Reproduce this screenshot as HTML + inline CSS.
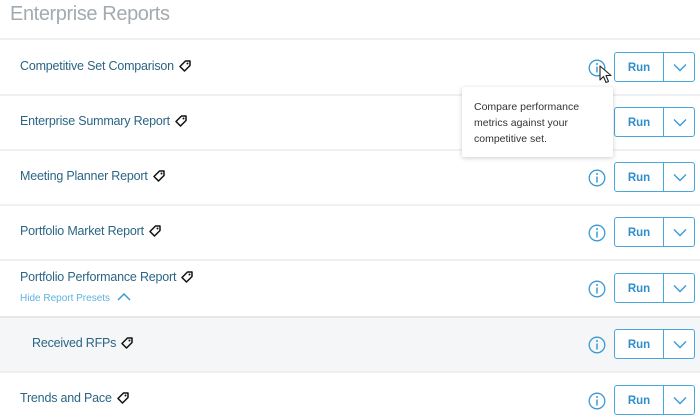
<!DOCTYPE html>
<html><head><style>
*{margin:0;padding:0;box-sizing:border-box}
body{width:700px;height:419px;background:#fff;font-family:"Liberation Sans",sans-serif;position:relative;overflow:hidden}
.title{position:absolute;left:10px;top:3px;font-size:20px;color:#a3abb0;font-weight:300;letter-spacing:-0.4px}
.line{position:absolute;left:0;width:700px;height:2px;background:#eef0f1}
.name{position:absolute;left:20px;font-size:12.5px;color:#2b6585;letter-spacing:-0.2px}
.tag{display:inline-block;vertical-align:-2px;margin-left:5px}
.info{position:absolute;left:588px;width:18px;height:18px}
.btn{position:absolute;left:614px;width:81px;height:30px;border:1px solid #48a8dc;border-radius:3px;background:#fff}
.btn .r{position:absolute;left:0;top:0;width:49px;height:28px;border-right:1px solid #48a8dc;color:#2f8fc8;font-weight:bold;font-size:11.5px;text-align:center;line-height:30px}
.btn svg{position:absolute;left:58px;top:10px}
.tip{position:absolute;left:462px;top:87px;width:151px;height:70px;background:#fff;box-shadow:0 1px 5px rgba(0,0,0,.2);border-radius:2px;font-size:10.5px;line-height:16px;color:#333;padding:12px 12px}
</style></head><body>
<div class="title">Enterprise Reports</div>
<div style="position:absolute;left:0;top:317px;width:700px;height:55px;background:#f4f6f7"></div>
<div class="line" style="top:38px"></div>
<div class="line" style="top:94px"></div>
<div class="line" style="top:149px"></div>
<div class="line" style="top:204px"></div>
<div class="line" style="top:259px"></div>
<div class="line" style="top:316px;background:#e4e8ea"></div>
<div class="line" style="top:371px"></div>

<div class="name" style="top:59px">Competitive Set Comparison<svg class="tag" width="12" height="12" viewBox="0 0 12 12"><path d="M1 6.5L6.5 1H11V5.5L5.5 11Z" fill="none" stroke="#111" stroke-width="1.5" stroke-linejoin="round"/><circle cx="8.5" cy="3.5" r="1" fill="#111"/></svg></div>
<div class="name" style="top:114px">Enterprise Summary Report<svg class="tag" width="12" height="12" viewBox="0 0 12 12"><path d="M1 6.5L6.5 1H11V5.5L5.5 11Z" fill="none" stroke="#111" stroke-width="1.5" stroke-linejoin="round"/><circle cx="8.5" cy="3.5" r="1" fill="#111"/></svg></div>
<div class="name" style="top:169px">Meeting Planner Report<svg class="tag" width="12" height="12" viewBox="0 0 12 12"><path d="M1 6.5L6.5 1H11V5.5L5.5 11Z" fill="none" stroke="#111" stroke-width="1.5" stroke-linejoin="round"/><circle cx="8.5" cy="3.5" r="1" fill="#111"/></svg></div>
<div class="name" style="top:224px">Portfolio Market Report<svg class="tag" width="12" height="12" viewBox="0 0 12 12"><path d="M1 6.5L6.5 1H11V5.5L5.5 11Z" fill="none" stroke="#111" stroke-width="1.5" stroke-linejoin="round"/><circle cx="8.5" cy="3.5" r="1" fill="#111"/></svg></div>
<div class="name" style="top:270px">Portfolio Performance Report<svg class="tag" width="12" height="12" viewBox="0 0 12 12"><path d="M1 6.5L6.5 1H11V5.5L5.5 11Z" fill="none" stroke="#111" stroke-width="1.5" stroke-linejoin="round"/><circle cx="8.5" cy="3.5" r="1" fill="#111"/></svg></div>
<div class="name" style="top:293px;font-size:10px;color:#5bb3e0;letter-spacing:0">Hide Report Presets <svg width="14" height="8" viewBox="0 0 14 8" style="margin-left:4px"><path d="M1 7L7 1L13 7" fill="none" stroke="#3a9ad6" stroke-width="1.5"/></svg></div>
<div class="name" style="top:336px;left:32px">Received RFPs<svg class="tag" width="12" height="12" viewBox="0 0 12 12"><path d="M1 6.5L6.5 1H11V5.5L5.5 11Z" fill="none" stroke="#111" stroke-width="1.5" stroke-linejoin="round"/><circle cx="8.5" cy="3.5" r="1" fill="#111"/></svg></div>
<div class="name" style="top:391px">Trends and Pace<svg class="tag" width="12" height="12" viewBox="0 0 12 12"><path d="M1 6.5L6.5 1H11V5.5L5.5 11Z" fill="none" stroke="#111" stroke-width="1.5" stroke-linejoin="round"/><circle cx="8.5" cy="3.5" r="1" fill="#111"/></svg></div>

<svg class="info" style="top:59px" viewBox="0 0 18 18"><circle cx="9" cy="9" r="7.8" fill="none" stroke="#3a9ad6" stroke-width="1.3"/><circle cx="9" cy="5" r="1" fill="#3a9ad6"/><path d="M9 7.5V13.5" stroke="#3a9ad6" stroke-width="1.5"/></svg>
<svg class="info" style="top:169px" viewBox="0 0 18 18"><circle cx="9" cy="9" r="7.8" fill="none" stroke="#3a9ad6" stroke-width="1.3"/><circle cx="9" cy="5" r="1" fill="#3a9ad6"/><path d="M9 7.5V13.5" stroke="#3a9ad6" stroke-width="1.5"/></svg>
<svg class="info" style="top:224px" viewBox="0 0 18 18"><circle cx="9" cy="9" r="7.8" fill="none" stroke="#3a9ad6" stroke-width="1.3"/><circle cx="9" cy="5" r="1" fill="#3a9ad6"/><path d="M9 7.5V13.5" stroke="#3a9ad6" stroke-width="1.5"/></svg>
<svg class="info" style="top:280px" viewBox="0 0 18 18"><circle cx="9" cy="9" r="7.8" fill="none" stroke="#3a9ad6" stroke-width="1.3"/><circle cx="9" cy="5" r="1" fill="#3a9ad6"/><path d="M9 7.5V13.5" stroke="#3a9ad6" stroke-width="1.5"/></svg>
<svg class="info" style="top:336px" viewBox="0 0 18 18"><circle cx="9" cy="9" r="7.8" fill="none" stroke="#3a9ad6" stroke-width="1.3"/><circle cx="9" cy="5" r="1" fill="#3a9ad6"/><path d="M9 7.5V13.5" stroke="#3a9ad6" stroke-width="1.5"/></svg>
<svg class="info" style="top:392px" viewBox="0 0 18 18"><circle cx="9" cy="9" r="7.8" fill="none" stroke="#3a9ad6" stroke-width="1.3"/><circle cx="9" cy="5" r="1" fill="#3a9ad6"/><path d="M9 7.5V13.5" stroke="#3a9ad6" stroke-width="1.5"/></svg>

<svg style="position:absolute;left:599px;top:65px" width="14" height="20" viewBox="0 0 14 20"><path d="M1 1V15L4.5 11.5L7 17.5L9.5 16.5L7 10.5H12Z" fill="#fff" stroke="#222" stroke-width="1.1" stroke-linejoin="round"/></svg>

<div class="btn" style="top:52px"><div class="r">Run</div><svg width="14" height="9" viewBox="0 0 14 9"><path d="M1 1.5L7 7.5L13 1.5" fill="none" stroke="#3a9ad6" stroke-width="1.4"/></svg></div>
<div class="btn" style="top:107px"><div class="r">Run</div><svg width="14" height="9" viewBox="0 0 14 9"><path d="M1 1.5L7 7.5L13 1.5" fill="none" stroke="#3a9ad6" stroke-width="1.4"/></svg></div>
<div class="btn" style="top:162px"><div class="r">Run</div><svg width="14" height="9" viewBox="0 0 14 9"><path d="M1 1.5L7 7.5L13 1.5" fill="none" stroke="#3a9ad6" stroke-width="1.4"/></svg></div>
<div class="btn" style="top:217px"><div class="r">Run</div><svg width="14" height="9" viewBox="0 0 14 9"><path d="M1 1.5L7 7.5L13 1.5" fill="none" stroke="#3a9ad6" stroke-width="1.4"/></svg></div>
<div class="btn" style="top:273px"><div class="r">Run</div><svg width="14" height="9" viewBox="0 0 14 9"><path d="M1 1.5L7 7.5L13 1.5" fill="none" stroke="#3a9ad6" stroke-width="1.4"/></svg></div>
<div class="btn" style="top:329px"><div class="r">Run</div><svg width="14" height="9" viewBox="0 0 14 9"><path d="M1 1.5L7 7.5L13 1.5" fill="none" stroke="#3a9ad6" stroke-width="1.4"/></svg></div>
<div class="btn" style="top:385px"><div class="r">Run</div><svg width="14" height="9" viewBox="0 0 14 9"><path d="M1 1.5L7 7.5L13 1.5" fill="none" stroke="#3a9ad6" stroke-width="1.4"/></svg></div>

<div class="tip">Compare performance metrics against your competitive set.</div>
</body></html>
